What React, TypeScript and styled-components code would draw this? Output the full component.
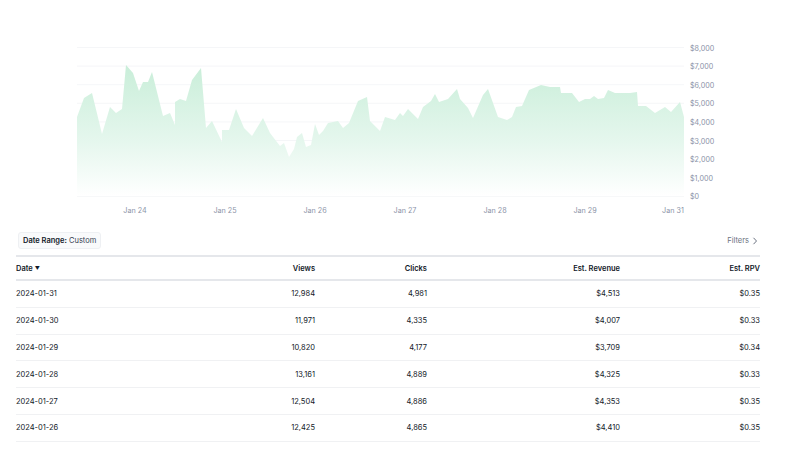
import React from 'react'
import styled, { createGlobalStyle } from 'styled-components'

const Global = createGlobalStyle`
  body { margin: 0; background: #fff; font-family: Inter, "Liberation Sans", sans-serif; color: #111827; }
`

const pts: [number, number][] = [
  [77,117],[84,98],[92,93],[102,134],[110,107],[116,113],[122,109],[126,65],[133,73],[139,91],[143,82],[148,82],[152,72],[163,116],[170,113],[175,125],[175,102],[180,99],[186,101],[192,80],[201,68],[206,128],[212,121],[222,142],[222,130],[229,130],[236,109],[244,128],[252,136],[263,118],[270,133],[280,146],[284,143],[289,157],[294,149],[297,137],[302,133],[306,147],[311,145],[315,124],[319,135],[323,131],[328,123],[338,121],[343,128],[349,123],[358,101],[367,97],[370,121],[380,131],[385,117],[395,120],[400,113],[403,116],[408,109],[418,119],[423,107],[431,101],[435,94],[439,102],[448,99],[457,89],[460,99],[468,108],[473,118],[483,95],[488,89],[498,117],[507,120],[512,117],[516,107],[522,106],[529,90],[541,85],[550,87],[560,87],[561,93],[572,93],[579,102],[585,99],[590,99],[594,96],[598,99],[604,98],[608,90],[615,93],[630,93],[637,92],[638,106],[646,106],[655,113],[665,107],[671,112],[680,102],[684,117],
]

const rows = [
  ['2024-01-31', '12,984', '4,981', '$4,513', '$0.35'],
  ['2024-01-30', '11,971', '4,335', '$4,007', '$0.33'],
  ['2024-01-29', '10,820', '4,177', '$3,709', '$0.34'],
  ['2024-01-28', '13,161', '4,889', '$4,325', '$0.33'],
  ['2024-01-27', '12,504', '4,886', '$4,353', '$0.35'],
  ['2024-01-26', '12,425', '4,865', '$4,410', '$0.35'],
]

const Page = styled.div`
  width: 792px;
  height: 450px;
  overflow: hidden;
`

const ChartSvg = styled.svg`
  display: block;
  width: 792px;
  height: 226px;
`

const Section = styled.div`
  padding: 0 32px 0 16px;
`

const Toolbar = styled.div`
  display: flex;
  align-items: center;
  justify-content: space-between;
  height: 29px;
  padding-right: 2px;
`

const Badge = styled.span`
  font-size: 7.5px;
  color: #374151;
  background: #f9fafb;
  border: 1px solid #eef0f3;
  border-radius: 3px;
  padding: 3px 4px;
  margin-left: 2px;
  b { font-weight: 600; color: #111827; }
`

const Filters = styled.span`
  font-size: 7.5px;
  color: #6b7280;
  display: flex;
  align-items: center;
  gap: 3px;
`

const Table = styled.div`
  border-top: 2px solid #e5e7eb;
`

const Row = styled.div<{ $head?: boolean }>`
  display: grid;
  grid-template-columns: 60px 239px 112px 193px 140px;
  align-items: center;
  height: ${(p) => (p.$head ? '22px' : '25.8px')};
  border-bottom: ${(p) => (p.$head ? '2px solid #e5e7eb' : '1px solid #f0f1f3')};
  font-size: 7.5px;
  font-weight: ${(p) => (p.$head ? 600 : 400)};
  color: #111827;
`

const Cell = styled.span<{ $left?: boolean }>`
  text-align: ${(p) => (p.$left ? 'left' : 'right')};
`

const Caret = styled.span`
  font-size: 5px;
  vertical-align: 1px;
`

export default function App() {
  const line = pts.map((p) => p.join(',')).join(' ')
  const area = `77,196 ${line} 684,196`
  const yLabels = ['$8,000', '$7,000', '$6,000', '$5,000', '$4,000', '$3,000', '$2,000', '$1,000', '$0']
  const xLabels: [string, number][] = [['Jan 24', 135], ['Jan 25', 225], ['Jan 26', 315], ['Jan 27', 405], ['Jan 28', 495], ['Jan 29', 585], ['Jan 31', 673]]
  return (
    <Page>
      <Global />
      <ChartSvg viewBox="0 0 792 226">
        <defs>
          <linearGradient id="g" x1="0" y1="0" x2="0" y2="1">
            <stop offset="0" stopColor="#c9eed9" />
            <stop offset="0.6" stopColor="#e6f7ee" />
            <stop offset="1" stopColor="#ffffff" />
          </linearGradient>
        </defs>
        {yLabels.map((l, i) => {
          const y = 47.5 + i * 18.6
          return (
            <g key={l}>
              <line x1="77" x2="684" y1={y} y2={y} stroke="#f3f4f6" strokeWidth="0.8" />
              <text x="690" y={y + 3} fontSize="7.2" fill="#8b93a7" fontFamily="Inter, sans-serif">{l}</text>
            </g>
          )
        })}
        <polygon points={area} fill="url(#g)" />
        {xLabels.map(([l, x]) => (
          <text key={l} x={x} y="213" fontSize="7.2" fill="#8b93a7" textAnchor="middle" fontFamily="Inter, sans-serif">{l}</text>
        ))}
      </ChartSvg>
      <Section>
        <Toolbar>
          <Badge><b>Date Range:</b> Custom</Badge>
          <Filters>
            Filters
            <svg width="6" height="8" viewBox="0 0 6 8"><path d="M1.5 0.8 L4.5 4 L1.5 7.2" fill="none" stroke="#6b7280" strokeWidth="1" /></svg>
          </Filters>
        </Toolbar>
        <Table>
          <Row $head>
            <Cell $left>Date <Caret>▼</Caret></Cell>
            <Cell>Views</Cell>
            <Cell>Clicks</Cell>
            <Cell>Est. Revenue</Cell>
            <Cell>Est. RPV</Cell>
          </Row>
          {rows.map((r) => (
            <Row key={r[0]}>
              <Cell $left>{r[0]}</Cell>
              <Cell>{r[1]}</Cell>
              <Cell>{r[2]}</Cell>
              <Cell>{r[3]}</Cell>
              <Cell>{r[4]}</Cell>
            </Row>
          ))}
        </Table>
      </Section>
    </Page>
  )
}
